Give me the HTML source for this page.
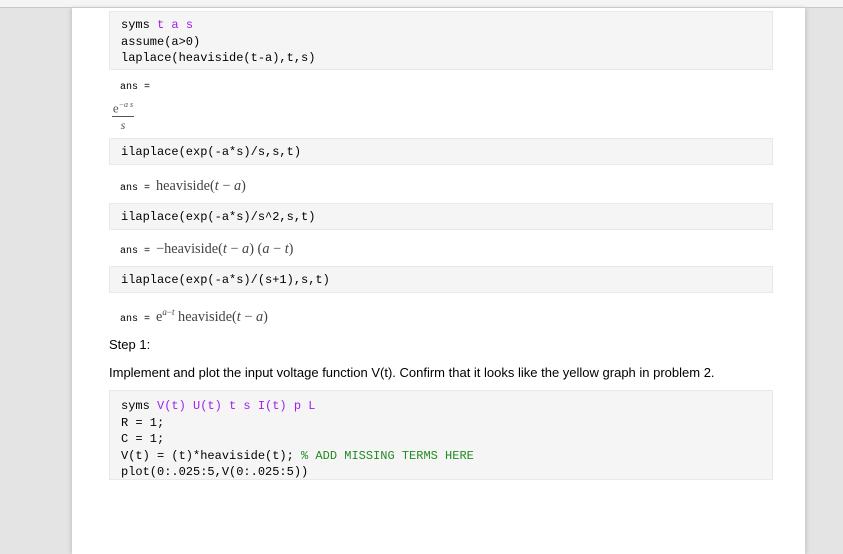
<!DOCTYPE html>
<html><head><meta charset="utf-8"><style>
body{margin:0;width:843px;height:554px;background:#e4e4e4;position:relative;overflow:hidden;font-family:"Liberation Sans",sans-serif}
.top{position:absolute;left:0;top:0;width:843px;height:7px;background:#f5f5f5;border-bottom:1px solid #c8c8c8}
.page{position:absolute;left:72px;top:8px;width:733px;height:546px;background:#fff;box-shadow:-2px 0 3px #ccc,2px 0 3px #ccc}
.code{position:absolute;left:109px;width:664px;background:#f5f5f5;border:1px solid #e9e9e9;font-family:"Liberation Mono",monospace;font-size:12px;line-height:16.5px;color:#000;box-sizing:border-box;padding-left:11px;white-space:pre}
.p{color:#a020f0}.g{color:#228b22}
.ans{position:absolute;left:120px;font-family:"Liberation Mono",monospace;font-size:10px;color:#000}
.m{font-family:"Liberation Serif",serif;font-size:14.3px;color:#444}
.txt{position:absolute;left:109px;font-size:13px;color:#000}
</style></head><body>
<div class="top"></div>
<div class="page"></div>
<div class="code" style="top:11px;height:59px;padding-top:5px">syms <span class="p">t a s</span>
assume(a&gt;0)
laplace(heaviside(t-a),t,s)</div>
<div class="ans" style="top:82px">ans =</div>
<div style="position:absolute;left:112px;top:97px;width:22px;text-align:center;font-family:'Liberation Serif',serif;color:#555">
<div style="font-size:13px;border-bottom:1px solid #555;line-height:16px">e<sup style="font-size:8px;font-style:italic">−a s</sup></div>
<div style="font-size:12px;font-style:italic;line-height:17px">s</div></div>
<div class="code" style="top:138px;height:27px;padding-top:5px">ilaplace(exp(-a*s)/s,s,t)</div>
<div class="ans" style="top:178px">ans = <span class="m">heaviside(<i>t</i> − <i>a</i>)</span></div>
<div class="code" style="top:203px;height:27px;padding-top:5px">ilaplace(exp(-a*s)/s^2,s,t)</div>
<div class="ans" style="top:241px">ans = <span class="m">−heaviside(<i>t</i> − <i>a</i>) (<i>a</i> − <i>t</i>)</span></div>
<div class="code" style="top:266px;height:27px;padding-top:5px">ilaplace(exp(-a*s)/(s+1),s,t)</div>
<div class="ans" style="top:307px">ans = <span class="m">e<sup style="font-size:9px"><i>a</i>−<i>t</i></sup> heaviside(<i>t</i> − <i>a</i>)</span></div>
<div class="txt" style="top:337px">Step 1:</div>
<div class="txt" style="top:365px">Implement and plot the input voltage function V(t). Confirm that it looks like the yellow graph in problem 2.</div>
<div class="code" style="top:390px;height:90px;padding-top:7px">syms <span class="p">V(t) U(t) t s I(t) p L</span>
R = 1;
C = 1;
V(t) = (t)*heaviside(t); <span class="g">% ADD MISSING TERMS HERE</span>
plot(0:.025:5,V(0:.025:5))</div>
</body></html>
